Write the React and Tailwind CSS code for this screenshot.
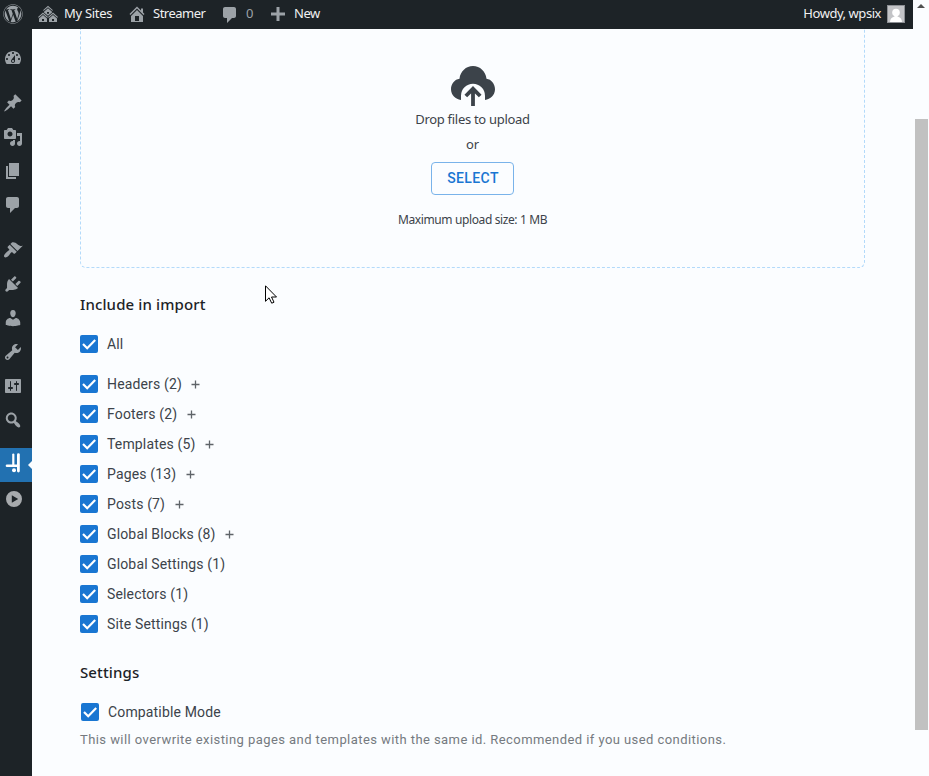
import { useState } from "react";
import { FaWordpress } from "react-icons/fa";

// 20x20 admin icons
const icons = {
  dashboard: "M3.76 16h12.48c1.1-1.37 1.76-3.11 1.76-5 0-4.42-3.58-8-8-8s-8 3.58-8 8c0 1.89.66 3.63 1.76 5zM10 4c.55 0 1 .45 1 1s-.45 1-1 1-1-.45-1-1 .45-1 1-1zM6 6c.55 0 1 .45 1 1s-.45 1-1 1-1-.45-1-1 .45-1 1-1zm8 0c.55 0 1 .45 1 1s-.45 1-1 1-1-.45-1-1 .45-1 1-1zm-5.37 5.55L12 7v6c0 1.1-.9 2-2 2s-2-.9-2-2c0-.57.24-1.08.63-1.45zM4 10c.55 0 1 .45 1 1s-.45 1-1 1-1-.45-1-1 .45-1 1-1zm12 0c.55 0 1 .45 1 1s-.45 1-1 1-1-.45-1-1 .45-1 1-1zm-5 3c0-.55-.45-1-1-1s-1 .45-1 1 .45 1 1 1 1-.45 1-1z",
  post: "M10.44 3.02l1.82-1.82 6.36 6.35-1.83 1.82c-1.05-.68-2.48-.57-3.41.36l-.75.75c-.92.93-1.04 2.35-.35 3.41l-1.83 1.82-2.41-2.41-2.8 2.79c-.42.42-3.38 2.71-3.8 2.29s1.86-3.39 2.28-3.81l2.79-2.79L4.1 9.36l1.83-1.82c1.05.69 2.48.57 3.4-.36l.75-.75c.93-.92 1.05-2.35.36-3.41z",
  media: "M13 11V4c0-.55-.45-1-1-1h-1.67L9 1H5L3.67 3H2c-.55 0-1 .45-1 1v7c0 .55.45 1 1 1h10c.55 0 1-.45 1-1zM7 4.5c1.38 0 2.5 1.12 2.5 2.5S8.38 9.5 7 9.5 4.5 8.38 4.5 7 5.62 4.5 7 4.5zM14 6h5v10.5c0 1.38-1.12 2.5-2.5 2.5S14 17.88 14 16.5s1.12-2.5 2.5-2.5c.17 0 .34.02.5.05V9h-3V6zm-4 8.05V13h2v3.5c0 1.38-1.12 2.5-2.5 2.5S7 17.88 7 16.5 8.12 14 9.5 14c.17 0 .34.02.5.05z",
  page: "M6 15V2h10v13H6zm-1 1h8v2H3V5h2v11z",
  comments: "M5 2h9c1.1 0 2 .9 2 2v7c0 1.1-.9 2-2 2h-2l-5 5v-5H5c-1.1 0-2-.9-2-2V4c0-1.1.9-2 2-2z",
  appearance: "M14.48 11.06L7.41 3.99l1.5-1.5c.5-.56 2.3-.47 3.51.32 1.21.8 1.43 1.28 2.91 2.1 1.18.64 2.45 1.26 4.45.85zm-.71.71L6.7 4.7 4.93 6.47c-.39.39-.39 1.02 0 1.41l1.06 1.06c.39.39.39 1.03 0 1.42-.6.6-1.43 1.11-2.21 1.69-.35.26-.7.53-1.01.84C1.43 14.23.4 16.08 1.4 17.07c.99 1 2.84-.03 4.18-1.36.31-.31.58-.66.85-1.02.57-.78 1.08-1.61 1.69-2.21.39-.39 1.02-.39 1.41 0l1.06 1.06c.39.39 1.02.39 1.41 0z",
  plugins: "M13.11 4.36L9.87 7.6 8 5.73l3.24-3.24c.35-.34 1.05-.2 1.56.32.52.51.66 1.21.31 1.55zm-8 1.77l.91-1.12 9.01 9.01-1.19.84c-.71.71-2.63 1.16-3.82 1.16H6.14L4.9 17.26c-.59.59-1.54.59-2.12 0-.59-.58-.59-1.53 0-2.12l1.24-1.24v-3.88c0-1.13.4-3.19 1.09-3.89zm7.26 3.97l3.24-3.24c.34-.35 1.04-.21 1.55.31.52.51.66 1.21.31 1.55l-3.24 3.25z",
  users: "M10 9.25c-2.27 0-2.73-3.44-2.73-3.44C7 4.02 7.82 2 9.97 2c2.16 0 2.98 2.02 2.71 3.81 0 0-.41 3.44-2.68 3.44zm0 2.57L12.72 10c2.39 0 4.52 2.33 4.52 4.53v2.49s-3.65 1.13-7.24 1.13c-3.65 0-7.24-1.13-7.24-1.13v-2.49c0-2.25 1.94-4.48 4.47-4.48z",
  tools: "M16.68 9.77c-1.34 1.34-3.3 1.67-4.95.99l-5.41 6.52c-.99.99-2.59.99-3.58 0s-.99-2.59 0-3.57l6.52-5.42c-.68-1.65-.35-3.61.99-4.95 1.28-1.28 3.12-1.62 4.72-1.06l-2.89 2.89 2.82 2.82 2.86-2.87c.53 1.58.18 3.39-1.08 4.65zM3.81 16.21c.4.39 1.04.39 1.43 0 .4-.4.4-1.04 0-1.43-.39-.4-1.03-.4-1.43 0-.39.39-.39 1.03 0 1.43z",
  settings: "M18 16V4c0-.55-.45-1-1-1H3c-.55 0-1 .45-1 1v12c0 .55.45 1 1 1h14c.55 0 1-.45 1-1zM8 11h1c.55 0 1 .45 1 1s-.45 1-1 1H8v1.5c0 .28-.22.5-.5.5s-.5-.22-.5-.5V13H6c-.55 0-1-.45-1-1s.45-1 1-1h1V5.5c0-.28.22-.5.5-.5s.5.22.5.5V11zm5-2h-1c-.55 0-1-.45-1-1s.45-1 1-1h1V5.5c0-.28.22-.5.5-.5s.5.22.5.5V7h1c.55 0 1 .45 1 1s-.45 1-1 1h-1v5.5c0 .28-.22.5-.5.5s-.5-.22-.5-.5V9z",
  search: "M12.14 4.18c1.87 1.87 2.11 4.75.72 6.89.12.1.22.21.36.31.2.16.47.36.81.59.34.24.56.39.66.47.42.31.73.57.94.78.32.32.6.65.84 1 .25.35.44.69.59 1.04.14.35.21.68.18 1-.02.32-.14.59-.36.81s-.49.34-.81.36c-.31.02-.65-.04-.99-.19-.35-.14-.7-.34-1.04-.59-.35-.24-.68-.52-1-.84-.21-.21-.47-.52-.77-.93-.1-.13-.25-.35-.47-.66-.22-.32-.4-.57-.56-.78-.16-.2-.29-.35-.44-.5-2.07 1.09-4.69.76-6.44-.98-2.14-2.15-2.14-5.64 0-7.78 2.15-2.15 5.63-2.15 7.78 0zm-1.41 6.36c1.36-1.37 1.36-3.58 0-4.95-1.37-1.37-3.59-1.37-4.95 0-1.37 1.37-1.37 3.58 0 4.95 1.36 1.37 3.58 1.37 4.95 0z",
  sites: "M14.27 6.87L10 3.14 5.73 6.87 5 6.14l5-4.38 5 4.38zM14 8.42l-4.05 3.43L6 8.38v-.74l4-3.5 4 3.5v.78zM11 9.7V8H9v1.7h2zm-1.73 4.03L5 10 .73 13.73 0 13l5-4.38L10 13zm10 0L15 10l-4.27 3.73L10 13l5-4.38L20 13zM5 11l4 3.5V18H1v-3.5zm10 0l4 3.5V18h-8v-3.5zm-9 6v-2H4v2h2zm10 0v-2h-2v2h2z",
  home: "M16 8.5l1.53 1.53-1.06 1.06L10 4.6l-6.47 6.49-1.06-1.06L10 2.5l4 4v-2h2v4zm-6-2.46l6 5.99V18H4v-5.97zM12 17v-5H8v5h4z",
  plus: "M17 8.5v3h-5.5V17h-3v-5.5H3v-3h5.5V3h3v5.5z",
  play: "M10 2a8 8 0 1 0 0 16a8 8 0 1 0 0-16zM7.8 6.2L14.2 10L7.8 13.8z",
};

const Icon = ({ name, className = "" }) => (
  <svg viewBox="0 0 20 20" fill="currentColor" fillRule="evenodd" className={`size-5 shrink-0 ${className}`}>
    <path d={icons[name]} />
  </svg>
);

const menuGroups = [
  ["dashboard"],
  ["post", "media", "page", "comments"],
  ["appearance", "plugins", "users", "tools", "settings", "search"],
];

const importItems = [
  { name: "Headers (2)", more: true },
  { name: "Footers (2)", more: true },
  { name: "Templates (5)", more: true },
  { name: "Pages (13)", more: true },
  { name: "Posts (7)", more: true },
  { name: "Global Blocks (8)", more: true },
  { name: "Global Settings (1)" },
  { name: "Selectors (1)" },
  { name: "Site Settings (1)" },
];

const AdminBar = () => (
  <header className="flex h-[29px] w-[913px] items-center bg-[#1d2327] pb-[2px] font-['Noto_Sans','Open_Sans',sans-serif] text-[13px] tracking-[-0.45px] text-[#f0f0f1]">
    <FaWordpress className="ml-[3px] size-5 text-[#9ca2a7]" />
    <Icon name="sites" className="ml-[15px] text-[#9ca2a7]" />
    <span className="ml-[6px] w-[50px] whitespace-nowrap tracking-[-0.3px]">My Sites</span>
    <Icon name="home" className="ml-[13px] text-[#9ca2a7]" />
    <span className="ml-[6px] w-[53px] whitespace-nowrap tracking-[-0.5px]">Streamer</span>
    <Icon name="comments" className="ml-[14px] mt-[2px] text-[#9ca2a7]" />
    <span className="ml-[6px] w-2 text-[#9ca2a7]">0</span>
    <Icon name="plus" className="ml-[14px] text-[#9ca2a7]" />
    <span className="ml-[6px]">New</span>
    <span className="ml-auto">Howdy, wpsix</span>
    <span className="ml-[6px] mr-2 flex size-[18px] border border-[#8c8f94] bg-[#c3c4c7]">
      <svg viewBox="0 0 16 16" className="size-4" fill="#fff">
        <circle cx="8" cy="6.5" r="3.8" />
        <path d="M6.5 9h3v1.5c2.5.6 4.5 2.5 4.5 5.5H2c0-3 2-4.9 4.5-5.5z" />
      </svg>
    </span>
  </header>
);

const Sidebar = () => (
  <nav className="flex w-8 shrink-0 flex-col bg-[#1d2327] pt-3 text-[#9ca2a7]">
    {menuGroups.map((group, i) => (
      <div key={i} className="mb-[11px]">
        {group.map((name) => (
          <div key={name} className="flex h-[34px] items-center pl-[3px]">
            <Icon name={name} />
          </div>
        ))}
      </div>
    ))}
    <div className="flex h-[34px] items-center justify-between bg-[#2271b1] pl-[5px]">
      <svg viewBox="0 0 16 24" className="h-6 w-4" fill="none" stroke="#fff" strokeLinecap="round">
        <path d="M8.3 1.6V12.5" strokeWidth="2.2" />
        <path d="M13.4 1.6V18" strokeWidth="2.8" />
        <path d="M2 12.7H13" strokeWidth="2.6" />
        <circle cx="9" cy="17.2" r="2" fill="#fff" stroke="none" />
      </svg>
      <svg viewBox="0 0 4 8" className="h-2 w-1" fill="#fbfdff">
        <path d="M4 0v8L0 4z" />
      </svg>
    </div>
    <div className="flex h-[34px] items-center pl-[4px] text-[#a7aaad]">
      <Icon name="play" />
    </div>
  </nav>
);

const CheckRow = ({ label, more, className = "" }) => {
  const [checked, setChecked] = useState(true);
  return (
    <div className={`flex h-[30px] items-center text-[14px] text-[#3c434a] ${className}`}>
      <button
        type="button"
        onClick={() => setChecked(!checked)}
        className="flex size-[18px] items-center justify-center rounded-[2px] bg-[#1976d2]"
      >
        {checked && (
          <svg viewBox="0 0 18 18" className="size-[18px]" fill="none" stroke="#fff" strokeWidth="2.2">
            <path d="M3 9l4.2 4.2L15.2 5" />
          </svg>
        )}
      </button>
      <span className="ml-[9px] tracking-[0.15px]">{label}</span>
      {more && (
        <svg viewBox="0 0 9 9" className="ml-[9.5px] size-[9px]" stroke="#5f6469" strokeWidth="1.3">
          <path d="M4.5 .5v8M.5 4.5h8" />
        </svg>
      )}
    </div>
  );
};

const DropZone = () => (
  <div className="flex h-[239px] w-[785px] flex-col items-center rounded-b-md border border-t-0 border-dashed border-[#b3dafa] pt-[37px] font-['Noto_Sans','Open_Sans',sans-serif] text-[#3c434a]">
    <svg viewBox="0 0 44 40" className="h-10 w-11">
      <path
        fill="#3c434a"
        d="M10 34C4.5 33.4 0 29 0 23.3c0-5.6 3.7-10 8.5-10.6C9.2 5.5 15 0 22 0s12.8 5.5 13.5 12.7c4.8.6 8.5 5 8.5 10.6C44 29 39.5 33.4 34 34v-4.2a12 12 0 0 0-24 0z"
      />
      <path d="M22 40V23.5M14.8 30L22 22.8 29.2 30" fill="none" stroke="#3c434a" strokeWidth="3.8" />
    </svg>
    <p className="mt-[3px] text-[13px] leading-5 tracking-[-0.3px]">Drop files to upload</p>
    <p className="mt-[5px] text-[13px] leading-5">or</p>
    <button className="mt-2 h-[33px] w-[83px] rounded border border-[#79b3ea] pl-px font-['Roboto',sans-serif] text-[14px] font-medium tracking-[0.4px] text-[#1976d2]">
      SELECT
    </button>
    <p className="mt-[15px] text-[12px] leading-5 tracking-[-0.38px]">Maximum upload size: 1 MB</p>
  </div>
);

const Scrollbar = () => (
  <div className="flex w-4 flex-col items-center bg-[#fbfdff]">
    <svg viewBox="0 0 8 4" className="mt-1 h-1 w-2" fill="#505050">
      <path d="M4 0l4 4H0z" />
    </svg>
    <div className="mt-[111px] h-[611px] w-[13px] bg-[#c1c1c1]" />
  </div>
);

const App = () => {
  return (
    <div className="flex h-[776px] w-[929px] overflow-hidden bg-[#fbfdff]">
      <div className="flex w-[913px] flex-col">
        <AdminBar />
        <div className="flex flex-1">
          <Sidebar />
          <main className="flex-1 pl-12 font-['Roboto',sans-serif]">
            <DropZone />
            <h2 className="mt-6 font-['Noto_Sans','Open_Sans',sans-serif] text-[15px] leading-6 font-medium tracking-[0.12px] text-[#1d2327]">
              Include in import
            </h2>
            <CheckRow label="All" className="mt-[13px] mb-[10px]" />
            {importItems.map((item) => (
              <CheckRow key={item.name} label={item.name} more={item.more} />
            ))}
            <h2 className="mt-[21px] font-['Noto_Sans','Open_Sans',sans-serif] text-[15px] leading-6 font-medium tracking-[0.12px] text-[#1d2327]">
              Settings
            </h2>
            <CheckRow label="Compatible Mode" className="mt-[13px] ml-px" />
            <p className="mt-[3px] text-[13px] leading-5 tracking-[0.43px] text-[#757a80]">
              This will overwrite existing pages and templates with the same id. Recommended if you used conditions.
            </p>
          </main>
        </div>
      </div>
      <Scrollbar />
      {/* mouse pointer */}
      <svg viewBox="0 0 12 19" className="absolute top-[285px] left-[265px] h-[19px] w-3" fill="#fff" stroke="#000">
        <path d="M.5 .8v15.5l3.6-3.5 2.6 5.4 2.3-1-2.5-5.2h5z" />
      </svg>
    </div>
  );
};

export default App;
